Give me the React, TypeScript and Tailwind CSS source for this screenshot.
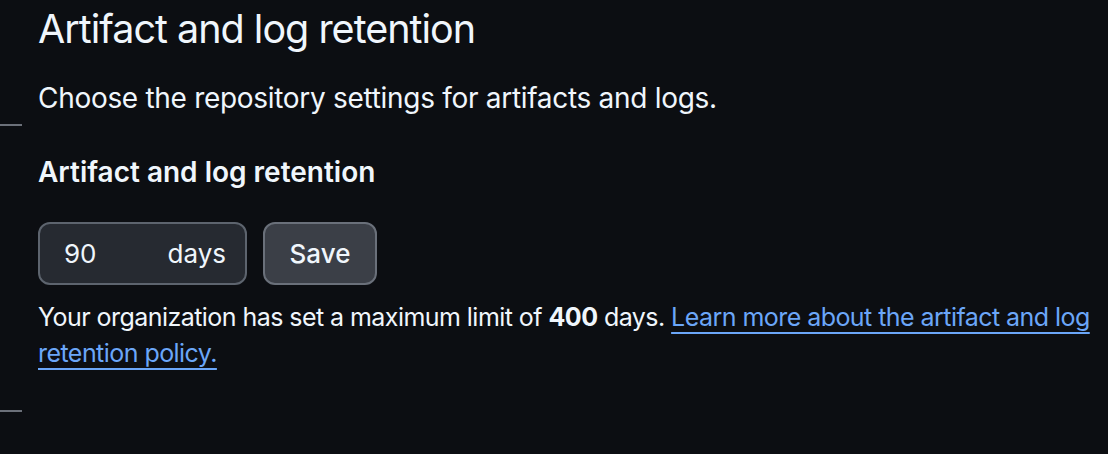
import React from "react";

export default function App() {
  return (
    <div
      className="relative w-[1108px] h-[454px] bg-[#0c0e12] overflow-hidden text-[#f0f6fc]"
      style={{ fontFamily: "Inter, 'Noto Sans', sans-serif" }}
    >
      <div className="absolute left-0 top-[124px] w-[22px] h-[2px] bg-[#6b7079]" />
      <div className="absolute left-0 top-[410px] w-[22px] h-[2px] bg-[#6b7079]" />
      <div className="flex flex-col pl-[38px] pt-[5px]">
        <h2 className="text-[39.5px] leading-[48px] font-normal tracking-[-1px]">
          Artifact and log retention
        </h2>
        <p className="mt-[27px] text-[28px] leading-[36px] tracking-[-0.3px]">
          Choose the repository settings for artifacts and logs.
        </p>
        <h3 className="mt-[38px] text-[28px] leading-[36px] font-semibold">
          Artifact and log retention
        </h3>
        <div className="mt-[32px] flex gap-[16px]">
          <div className="flex items-center justify-between w-[209px] h-[63px] rounded-[12px] border-2 border-[#5d646e] bg-[#262a31] pl-[24px] pr-[19px] text-[26px]">
            <span>90</span>
            <span>days</span>
          </div>
          <button className="w-[114px] h-[63px] rounded-[12px] border-2 border-[#6a707a] bg-[#3b3f47] text-[26px] font-medium text-[#f0f6fc]">
            Save
          </button>
        </div>
        <p className="mt-[14px] text-[25px] leading-[36px] w-[1070px] tracking-[-0.55px]">
          Your organization has set a maximum limit of <b className="font-bold">400</b> days.{" "}
          <a className="text-[#6ba6f8] underline underline-offset-[6px] decoration-2">
            Learn more about the artifact and log retention policy.
          </a>
        </p>
      </div>
    </div>
  );
}
